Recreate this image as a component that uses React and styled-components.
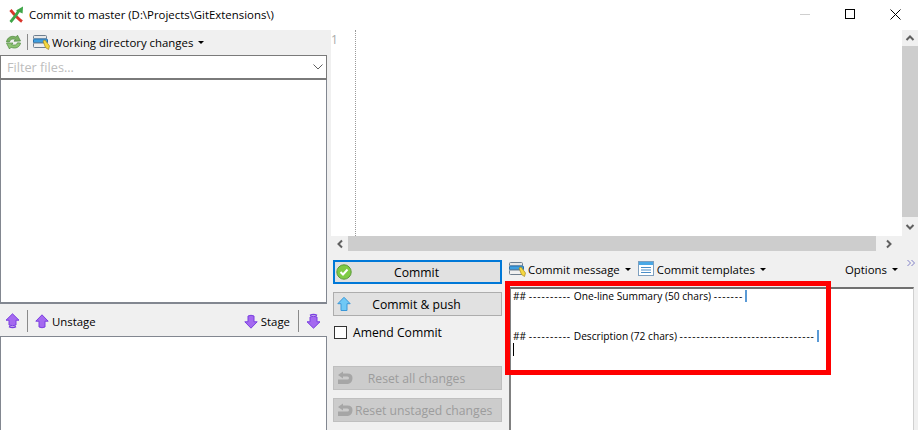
import React from "react";
import styled, { createGlobalStyle } from "styled-components";

const Global = createGlobalStyle`
  html, body { margin: 0; padding: 0; background: #fff; }
  * { box-sizing: border-box; }
`;

const Window = styled.div`
  position: relative;
  width: 918px;
  height: 430px;
  overflow: hidden;
  display: flex;
  flex-direction: column;
  background: #f0f0f0;
  color: #000;
  font-family: "Open Sans", "Noto Sans", sans-serif;
  font-size: 11.4px;
`;

const TitleBar = styled.div`
  height: 30px;
  flex: none;
  background: #fff;
  display: flex;
  align-items: center;
  padding: 0 17px 1px 9px;
  gap: 5px;
`;
const TitleText = styled.span`
  flex: 1;
`;
const WinButtons = styled.div`
  display: flex;
  align-items: center;
  gap: 35px;
  margin-bottom: 1px;
`;
const Body = styled.div`
  flex: 1;
  min-height: 0;
  display: flex;
`;
const Left = styled.div`
  width: 331px;
  flex: none;
  display: flex;
  flex-direction: column;
  padding-right: 4px;
`;
const Toolbar = styled.div`
  height: ${(p) => p.$h}px;
  flex: none;
  display: flex;
  align-items: center;
  padding: ${(p) => p.$pt || 0}px ${(p) => p.$pr || 0}px ${(p) => p.$pb || 0}px ${(p) => p.$pl || 0}px;
`;
const Sep = styled.div`
  width: 1px;
  height: ${(p) => p.$h}px;
  background: #8a8a8a;
  margin: 0 ${(p) => p.$m}px;
`;
const Label = styled.span`
  margin-left: ${(p) => p.$ml || 0}px;
  white-space: nowrap;
`;
const Spacer = styled.div`
  flex: 1;
`;
const Gap = styled.span`
  width: ${(p) => p.$w}px;
  flex: none;
`;
const Caret = styled.span`
  width: 0;
  height: 0;
  margin-left: ${(p) => p.$ml || 5}px;
  margin-top: 1px;
  border-left: 3px solid transparent;
  border-right: 3px solid transparent;
  border-top: 3px solid #000;
`;
const Combo = styled.div`
  height: 25px;
  flex: none;
  background: #fff;
  border: 1px solid #7a7a7a;
  border-bottom-width: 2px;
  display: flex;
  align-items: center;
  justify-content: space-between;
  padding: 0 3px 1px 6px;
  color: #bdbdbd;
  font-size: 12.7px;
`;
const FileList = styled.div`
  flex: ${(p) => (p.$grow ? 1 : "none")};
  height: ${(p) => (p.$grow ? "auto" : "94px")};
  min-height: 0;
  background: #fff;
  border: 1px solid #828790;
  border-top-width: ${(p) => (p.$grow ? 0 : 1)}px;
  border-bottom-width: ${(p) => (p.$grow ? 2 : 0)}px;
`;
const Right = styled.div`
  flex: 1;
  min-width: 0;
  display: flex;
  flex-direction: column;
`;
const EditorRow = styled.div`
  height: 206px;
  flex: none;
  display: flex;
`;
const Editor = styled.div`
  flex: 1;
  background: #fff;
  display: flex;
`;
const Gutter = styled.div`
  width: 25px;
  border-right: 1px dotted #9a9a9a;
  color: #aaaaaa;
  font-size: 12px;
  padding: 2px 0 0 0;
  line-height: 16px;
`;
const VScroll = styled.div`
  width: 16px;
  flex: none;
  display: flex;
  flex-direction: column;
  align-items: center;
`;
const VThumb = styled.div`
  align-self: stretch;
  flex: 1;
  background: #cdcdcd;
`;
const ArrowCell = styled.div`
  height: ${(p) => p.$h}px;
  width: ${(p) => p.$w}px;
  flex: none;
  display: flex;
  align-items: center;
  justify-content: center;
`;
const HScroll = styled.div`
  height: 15px;
  width: 571px;
  flex: none;
  display: flex;
`;
const HThumb = styled.div`
  flex: 1;
  background: #cdcdcd;
`;
const Lower = styled.div`
  flex: 1;
  min-height: 0;
  display: flex;
`;
const Actions = styled.div`
  width: 174px;
  flex: none;
  padding: 9px 0 0 2px;
  display: flex;
  flex-direction: column;
  font-size: 12.2px;
`;
const ActionButton = styled.div`
  position: relative;
  width: 169px;
  height: 24px;
  flex: none;
  margin-bottom: ${(p) => p.$mb}px;
  display: flex;
  align-items: center;
  justify-content: ${(p) => (p.$start ? "flex-start" : "center")};
  padding: 0 ${(p) => (p.$start ? 0 : 2)}px 0 ${(p) => (p.$start ? 21 : 0)}px;
  background: ${(p) => (p.$disabled ? "#cccccc" : "#e1e1e1")};
  border: ${(p) => (p.$focus ? "2px solid #0078d7" : `1px solid ${p.$disabled ? "#bfbfbf" : "#adadad"}`)};
  color: ${(p) => (p.$disabled ? "#9c9c9c" : "#000")};
`;
const ButtonIcon = styled.span`
  position: absolute;
  left: ${(p) => p.$l}px;
  top: 50%;
  transform: translateY(-50%);
  display: flex;
`;
const CheckRow = styled.label`
  display: flex;
  align-items: center;
  gap: 6px;
  height: 14px;
  margin: 0 0 27px 1px;
`;
const CheckBox = styled.span`
  width: 13px;
  height: 13px;
  flex: none;
  background: #fff;
  border: 1px solid #333;
`;
const Commit = styled.div`
  flex: 1;
  min-width: 0;
  display: flex;
  flex-direction: column;
`;
const MessageBox = styled.div`
  flex: 1;
  min-height: 0;
  margin: 0 4px 0 4px;
  background: #fff;
  border-left: 2px solid #808080;
  border-top: 2px solid #707070;
  border-right: 1px solid #d0d0d0;
  padding: 1px 0 0 2px;
  font-size: 10.2px;
  line-height: 13.2px;
  white-space: pre;
`;
const Rule = styled.span`
  letter-spacing: 0.95px;
`;
const Guide = styled.span`
  display: inline-block;
  width: 2px;
  height: 12px;
  margin-left: 2px;
  vertical-align: -2px;
  background: #5a9ad6;
`;
const Cursor = styled.span`
  display: block;
  width: 1px;
  height: 13px;
  background: #000;
`;
const Highlight = styled.div`
  position: absolute;
  left: 505px;
  top: 281px;
  width: 326px;
  height: 94px;
  border: 5px solid #f00;
  pointer-events: none;
`;
const Chevrons = styled.svg`
  margin-left: 9px;
  align-self: flex-start;
  margin-top: 8px;
`;

const GitLogo = () => (
  <svg width="15" height="17" viewBox="0 0 15 17">
    <path d="M1.5 4 C4 7 8 12 13 15.5" stroke="#d9352b" strokeWidth="3" fill="none" />
    <path d="M1.5 16 C5 12 8 8 10 4.5" stroke="#3fa648" strokeWidth="2.8" fill="none" />
    <path d="M7 4.5 L14 0.5 L13.6 7.5 Z" fill="#3fa648" />
  </svg>
);
const Refresh = () => (
  <svg width="17" height="16" viewBox="0 0 17 16">
    <path d="M1.5 8 C2 3.5 6.5 1 11 3 L12.5 1.2 L15.5 7 L9 7.2 L10.3 5.6 C7.5 4.4 5 5.4 4.5 8 Z" fill="#7bb063" stroke="#4f8a3e" strokeWidth=".7" />
    <path d="M15.5 9 C15 13 10.5 15.4 6 13.2 L4.5 15 L1.5 9.2 L8 9 L6.7 10.6 C9.5 11.8 12 10.8 12.5 8.8 Z" fill="#8ec473" stroke="#4f8a3e" strokeWidth=".7" />
  </svg>
);
const Changes = () => (
  <svg width="17" height="16" viewBox="0 0 17 16">
    <rect x=".5" y="1.5" width="13" height="3.5" rx="1" fill="#e8e8e8" stroke="#6f7f8f" />
    <rect x=".5" y="5" width="14" height="4" rx="1" fill="#3f9fe0" stroke="#2a6fa8" />
    <rect x=".5" y="9" width="13" height="4.5" rx="1" fill="#f0f0f0" stroke="#6f7f8f" />
    <path d="M10 7 L12 6 L16.5 12 L15.5 15.5 L12.5 13.5 Z" fill="#f5d840" stroke="#a8881a" strokeWidth=".7" />
  </svg>
);
const Templates = () => (
  <svg width="16" height="16" viewBox="0 0 16 16">
    <rect x=".5" y=".5" width="15" height="14" fill="#fff" stroke="#7d9fbf" />
    <rect x="1" y="1" width="14" height="3" fill="#49a8e6" />
    <path d="M3 6.5h10M3 9h10M3 11.5h10" stroke="#4a8ec8" strokeWidth="1.2" />
  </svg>
);
const UpArrow = () => (
  <svg width="14" height="15" viewBox="0 0 14 15">
    <path d="M7 .8 L13.2 7.2 H10 V13 Q7 14.5 4 13 V7.2 H.8 Z" fill="#a469f0" stroke="#7a3fe0" strokeWidth="1" />
  </svg>
);
const DownArrow = () => (
  <svg width="14" height="15" viewBox="0 0 14 15">
    <path d="M7 14.2 L13.2 7.8 H10 V2 Q7 .5 4 2 V7.8 H.8 Z" fill="#a469f0" stroke="#7a3fe0" strokeWidth="1" />
  </svg>
);
const DoubleUp = () => (
  <svg width="15" height="16" viewBox="0 0 15 16">
    <path d="M4 13.5 Q7.5 15.5 11 13.5" stroke="#7a3fe0" fill="none" strokeWidth="1.6" />
    <path d="M7.5 .8 L14 7.2 H11 V12 Q7.5 13.5 4 12 V7.2 H1 Z" fill="#a469f0" stroke="#7a3fe0" strokeWidth="1" />
  </svg>
);
const DoubleDown = () => (
  <svg width="15" height="16" viewBox="0 0 15 16">
    <path d="M4 2.5 Q7.5 .5 11 2.5" stroke="#7a3fe0" fill="none" strokeWidth="1.6" />
    <path d="M7.5 15.2 L14 8.8 H11 V4 Q7.5 2.5 4 4 V8.8 H1 Z" fill="#a469f0" stroke="#7a3fe0" strokeWidth="1" />
  </svg>
);
const CommitIcon = () => (
  <svg width="16" height="16" viewBox="0 0 16 16">
    <circle cx="8" cy="8" r="7.2" fill="#7fcb45" stroke="#5c9a3a" />
    <path d="M4.5 8 L7 10.5 L11.5 5.5" stroke="#fff" strokeWidth="2" fill="none" />
  </svg>
);
const PushIcon = () => (
  <svg width="14" height="15" viewBox="0 0 14 15">
    <path d="M7 .8 L13.2 7.2 H10 V14 H4 V7.2 H.8 Z" fill="#6fc8f5" stroke="#3a97d8" />
  </svg>
);
const ResetIcon = () => (
  <svg width="16" height="14" viewBox="0 0 16 14">
    <path d="M6 .5 L1 4 L6 7.5 V5.5 H10.5 Q12 5.5 12 7 Q12 8.5 10.5 8.5 H1 V13 H11 Q15.5 12 15.5 7 Q15.5 2.5 10.5 2.5 H6 Z" fill="#a6a6a6" />
  </svg>
);
const Chevron = ({ d }) => (
  <svg width="10" height="10" viewBox="0 0 10 10">
    <path d={d} stroke="#606060" strokeWidth="2" fill="none" />
  </svg>
);

export default function App() {
  return (
    <>
      <Global />
      <Window>
        <TitleBar>
          <GitLogo />
          <TitleText>Commit to master (D:\Projects\GitExtensions\)</TitleText>
          <WinButtons>
            <svg width="10" height="10" viewBox="0 0 10 10">
              <path d="M0 5.5h10" stroke="#cfcfcf" />
            </svg>
            <svg width="10" height="10" viewBox="0 0 10 10">
              <rect x=".5" y=".5" width="9" height="9" fill="none" stroke="#000" />
            </svg>
            <svg width="11" height="11" viewBox="0 0 11 11">
              <path d="M.5 .5 L10.5 10.5 M10.5 .5 L.5 10.5" stroke="#000" />
            </svg>
          </WinButtons>
        </TitleBar>
        <Body>
          <Left>
            <Toolbar $h={25} $pl={5} $pb={1}>
              <Refresh />
              <Sep $h={16} $m={5} />
              <Changes />
              <Label $ml={2}>Working directory changes</Label>
              <Caret />
            </Toolbar>
            <Combo>
              Filter files...
              <svg width="10" height="6" viewBox="0 0 10 6">
                <path d="M.5 .5 L5 5 L9.5 .5" stroke="#606060" fill="none" />
              </svg>
            </Combo>
            <FileList $grow />
            <Toolbar $h={32} $pl={5} $pr={6} $pt={2}>
              <DoubleUp />
              <Sep $h={22} $m={7} />
              <UpArrow />
              <Label $ml={3}>Unstage</Label>
              <Spacer />
              <DownArrow />
              <Label $ml={3}>Stage</Label>
              <Gap $w={1} />
              <Sep $h={22} $m={7} />
              <DoubleDown />
            </Toolbar>
            <FileList />
          </Left>
          <Right>
            <EditorRow>
              <Editor>
                <Gutter>1</Gutter>
              </Editor>
              <VScroll>
                <ArrowCell $h={16} $w={16}>
                  <Chevron d="M1.5 7 L5 3.5 L8.5 7" />
                </ArrowCell>
                <VThumb />
                <ArrowCell $h={19} $w={16}>
                  <Chevron d="M1.5 3 L5 6.5 L8.5 3" />
                </ArrowCell>
              </VScroll>
            </EditorRow>
            <HScroll>
              <ArrowCell $h={15} $w={17}>
                <Chevron d="M7 1.5 L3.5 5 L7 8.5" />
              </ArrowCell>
              <HThumb />
              <ArrowCell $h={15} $w={26}>
                <Chevron d="M3 1.5 L6.5 5 L3 8.5" />
              </ArrowCell>
            </HScroll>
            <Lower>
              <Actions>
                <ActionButton $focus $mb={8}>
                  <ButtonIcon $l={1}><CommitIcon /></ButtonIcon>
                  Commit
                </ActionButton>
                <ActionButton $mb={9}>
                  <ButtonIcon $l={3}><PushIcon /></ButtonIcon>
                  Commit &amp; push
                </ActionButton>
                <CheckRow>
                  <CheckBox />
                  Amend Commit
                </CheckRow>
                <ActionButton $disabled $mb={8}>
                  <ButtonIcon $l={3}><ResetIcon /></ButtonIcon>
                  Reset all changes
                </ActionButton>
                <ActionButton $disabled $start $mb={0}>
                  <ButtonIcon $l={3}><ResetIcon /></ButtonIcon>
                  Reset unstaged changes
                </ActionButton>
              </Actions>
              <Commit>
                <Toolbar $h={36} $pl={4} $pr={2}>
                  <Changes />
                  <Label $ml={2}>Commit message</Label>
                  <Caret $ml={5} />
                  <Gap $w={7} />
                  <Templates />
                  <Label $ml={3}>Commit templates</Label>
                  <Caret $ml={5} />
                  <Spacer />
                  <Label>Options</Label>
                  <Caret $ml={5} />
                  <Chevrons width="9" height="8" viewBox="0 0 9 8">
                    <path d="M.5 1 L3.5 4 L.5 7 M4.5 1 L7.5 4 L4.5 7" stroke="#8080c8" fill="none" />
                  </Chevrons>
                </Toolbar>
                <MessageBox>
                  {"## "}<Rule>----------</Rule>{" One-line Summary (50 chars) "}<Rule>-------</Rule>
                  <Guide />
                  {"\n\n\n## "}<Rule>----------</Rule>{" Description (72 chars) "}<Rule>--------------------------------</Rule>
                  <Guide />
                  <Cursor />
                </MessageBox>
              </Commit>
            </Lower>
          </Right>
        </Body>
        <Highlight />
      </Window>
    </>
  );
}
